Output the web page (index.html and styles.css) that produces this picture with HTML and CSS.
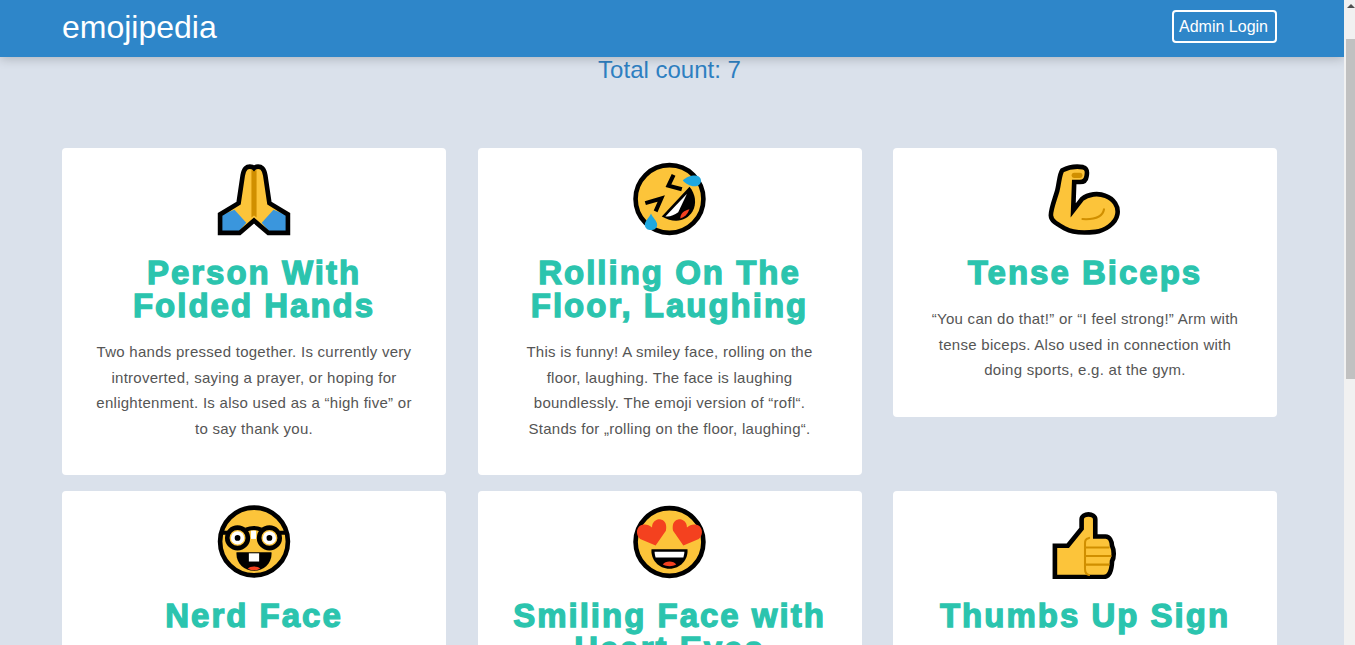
FILE: index.html
```html
<!DOCTYPE html>
<html lang="en">
<head>
  <meta charset="UTF-8" />
  <meta name="viewport" content="width=device-width, initial-scale=1.0"/>
  <title>Emojipedia</title>
  <link rel="stylesheet" href="styles.css">
</head>
<body>
  <div class="page">
    <!-- top bar -->
    <header class="navbar">
      <a class="brand" href="#">emojipedia</a>
      <a class="login" href="#">Admin Login</a>
    </header>

    <main class="content">
      <h2 class="count">Total count: 7</h2>

      <div class="cards">
        <!-- PRAY -->
        <article class="card">
          <svg class="emoji" viewBox="0 0 72 72">
            <path class="skin" d="M36 6 C38 4 42 4 44 6 C46 8 46.500 10 47 13 L51 40 L69 51 V69 H50 L36 57 L22 69 H3 V51 L21 40 L25 13 C25.500 10 26 8 28 6 C30 4 34 4 36 6 Z"/>
            <path class="blue" d="M3 52 L17 46.500 L28.500 59 L20 69 H3 Z M69 52 L55 46.500 L43.500 59 L52 69 H69 Z"/>
            <path class="gold-fill" d="M33.500 8 H38.500 V54 L36 52 L33.500 54 Z"/>
            <path class="line" d="M36 6 C38 4 42 4 44 6 C46 8 46.500 10 47 13 L51 40 L69 51 V69 H50 L36 57 L22 69 H3 V51 L21 40 L25 13 C25.500 10 26 8 28 6 C30 4 34 4 36 6 Z"/>
          </svg>
          <h3 class="title">Person With Folded Hands</h3>
          <p class="desc">Two hands pressed together. Is currently very introverted, saying a prayer, or hoping for enlightenment. Is also used as a “high five” or to say thank you.</p>
        </article>

        <!-- ROFL -->
        <article class="card">
          <svg class="emoji" viewBox="0 0 72 72">
            <circle class="skin line" cx="35.500" cy="36" r="33"/>
            <path class="thin" d="M39.500 12.500 L34.500 23 L47.500 26.500 M12 40 L27.500 35.500 L22 48"/>
            <path class="dark" d="M28 53 L55 24 C61 31 62 41 58 48 C52 58 40 60 28 53 Z"/>
            <path class="white" d="M31.500 53 L52.500 31 L44 49 C40 52 36 53.500 31.500 53 Z"/>
            <path class="red" d="M46 55 C46 50 50 47 55 46 C53 51 50 54 46 55 Z"/>
            <path class="drop" d="M48.500 18 C52 14 60 12 64 14 C67 16 67 21 63 23 C58 25 52 22 48.500 18 Z"/>
            <path class="drop" d="M17.500 50 C19 54 23.500 57 23.500 61 C23.500 68 11.500 68 11.500 61 C11.500 57 16 54 17.500 50 Z"/>
          </svg>
          <h3 class="title">Rolling On The Floor, Laughing</h3>
          <p class="desc">This is funny! A smiley face, rolling on the floor, laughing. The face is laughing boundlessly. The emoji version of “rofl“. Stands for „rolling on the floor, laughing“.</p>
        </article>

        <!-- BICEPS -->
        <article class="card">
          <svg class="emoji" viewBox="0 0 72 72">
            <path class="skin line" d="M14 8 C20 5 28 4 34 5 C38 6 38.500 9 37.500 14 C37 18 35 19.500 31 19.500 H25.500 L24.500 47 L33 36 C39 31 49 30 56 33 C64 36 69 43 67.500 51 C66 60 55 67 46 68 C36 69 24 69 17 65 C10 61 3 58 2.800 52 C2.700 46 6 38 9 28 C11 20 11 12 14 8 Z"/>
            <path class="gold" d="M25.500 13 H31"/>
            <path class="gold-thin" d="M33.500 55.500 C42 56 53 55 54.500 46"/>
          </svg>
          <h3 class="title">Tense Biceps</h3>
          <p class="desc">“You can do that!” or “I feel strong!” Arm with tense biceps. Also used in connection with doing sports, e.g. at the gym.</p>
        </article>

        <!-- NERD -->
        <article class="card">
          <svg class="emoji" viewBox="0 0 72 72">
            <circle class="skin line" cx="36" cy="35.500" r="33"/>
            <path class="thin" d="M4 27 H11 M61 27 H68 M28 24 C33 22 39 22 43 24"/>
            <rect class="white" x="33" y="25" width="5" height="8"/>
            <circle class="skin thin glass" cx="20" cy="32" r="10"/>
            <circle class="skin thin glass" cx="51" cy="32" r="10"/>
            <circle class="white" cx="20" cy="32" r="6.500"/>
            <circle class="white" cx="51" cy="32" r="6.500"/>
            <circle class="dark" cx="20" cy="32" r="2.800"/>
            <circle class="dark" cx="51" cy="32" r="2.800"/>
            <path class="dark" d="M19 46 H53 C54 56 46 64 36 64 C26 64 18 56 19 46 Z"/>
            <rect class="white" x="31" y="47" width="10" height="8"/>
            <path class="red" d="M30 62 C32 59 40 59 42 62 C38 64 34 64 30 62 Z"/>
          </svg>
          <h3 class="title">Nerd Face</h3>
        </article>

        <!-- HEARTS -->
        <article class="card">
          <svg class="emoji" viewBox="0 0 72 72">
            <circle class="skin line" cx="35.500" cy="36" r="33"/>
            <path class="heart" d="M22 39.500 L7 33 C2 29 3 20 10 19 C13 18.500 16 19.500 18.500 22 C18.500 16 23 13.500 27 14 C32 15 33 20 32 25 Z"/>
            <path class="heart" d="M49 39.500 L64 33 C69 29 68 20 61 19 C58 18.500 55 19.500 52.500 22 C52.500 16 48 13.500 44 14 C39 15 38 20 39 25 Z"/>
            <path class="dark" d="M18 43 H53 C54 53 46 62 35.500 62 C25 62 17 53 18 43 Z"/>
            <path class="white" d="M21 45.500 H50 C50 47.500 49.500 49 49 51 H22 C21.500 49 21 47.500 21 45.500 Z"/>
            <path class="red" d="M29 58 C31 54 40 54 42 58 C38 60 33 60 29 58 Z"/>
          </svg>
          <h3 class="title">Smiling Face with Heart Eyes</h3>
        </article>

        <!-- THUMBS UP -->
        <article class="card">
          <svg class="emoji" viewBox="0 0 72 72">
            <path class="skin line" d="M6.700 39.700 H19.300 L32.700 23 V14 C32.700 7.500 46 7.500 46 14 V30.700 H56 C60 30.700 62 35 62.300 39.700 C64.500 44 64.500 51 62.300 54.700 C62 64 60 70 54 70 H6.700 Z"/>
            <path class="gold-thin" d="M40 32 C36 33 36 35 36 38 V62 C36 66 37 67.500 40 68 M36 41.300 H59 M36 49.700 H61 M36 58 H59"/>
          </svg>
          <h3 class="title">Thumbs Up Sign</h3>
        </article>
      </div>
    </main>
  </div>

  <!-- scrollbar as it shows in the screenshot -->
  <div class="scrollbar">
    <div class="arrow"></div>
    <div class="thumb"></div>
  </div>
</body>
</html>
```

FILE: styles.css
```css
/* page */
html, body {
  height: 100%;
}
body {
  margin: 0;
  display: flex;
  height: 645px;
  overflow: hidden;
  background: #dae1eb;
  font-family: "Liberation Sans", Arial, sans-serif;
}
.page {
  flex: 1;
  min-width: 0;
  height: 645px;
  overflow: hidden;
}

/* top bar */
.navbar {
  position: relative;
  z-index: 1;
  display: flex;
  align-items: center;
  justify-content: space-between;
  box-sizing: border-box;
  height: 57px;
  padding: 0 67px 5px 62px;
  background: #2e86c9;
  box-shadow: 0 2px 10px rgba(0, 0, 0, .2);
}
.brand {
  margin-top: 2px;
  color: #fff;
  font-size: 32px;
  line-height: 48px;
  text-decoration: none;
}
.login {
  display: block;
  padding: 5px 7px 4px 5px;
  color: #fff;
  font-size: 16px;
  line-height: 20px;
  text-decoration: none;
  border: 2px solid #fff;
  border-radius: 4px;
}

/* content */
.content {
  padding: 0 67px 0 62px;
}
.count {
  margin: 0 0 66px;
  color: #2e7fc1;
  font-size: 24px;
  font-weight: 400;
  line-height: 25px;
  text-align: center;
}
.cards {
  display: grid;
  grid-template-columns: repeat(3, 384px);
  justify-content: space-between;
  align-items: start;
  row-gap: 16px;
}
.card {
  box-sizing: border-box;
  padding: 14px 32px 34px;
  background: #fff;
  border-radius: 4px;
  text-align: center;
}
.emoji {
  display: block;
  width: 74px;
  height: 74px;
  margin: 0 auto;
}
.title {
  margin: 20px 0 17px;
  color: #2bc4ae;
  font-size: 33px;
  font-weight: 700;
  line-height: 33px;
  letter-spacing: 2px;
  -webkit-text-stroke: 1.300px #2bc4ae;
}
.desc {
  margin: 0;
  color: #555;
  font-size: 15px;
  line-height: 25.600px;
  letter-spacing: .27px;
}

/* emoji parts */
.skin { fill: #fcc43a; }
.blue { fill: #3a96dd; }
.dark { fill: #000; }
.white { fill: #fff; }
.red { fill: #f4411f; }
.drop { fill: #1fa8e0; }
.heart { fill: #f4411f; }
.gold-fill { fill: #d08f00; }
.line {
  stroke: #000;
  stroke-width: 4.500;
}
.line:not(.skin) { fill: none; }
.thin {
  fill: none;
  stroke: #000;
  stroke-width: 4;
}
.skin.thin { fill: #fcc43a; }
.glass { stroke-width: 4.500; }
.gold {
  fill: none;
  stroke: #d08f00;
  stroke-width: 5;
  stroke-linecap: round;
}
.gold-thin {
  fill: none;
  stroke: #d08f00;
  stroke-width: 2;
  stroke-linecap: round;
}

/* scrollbar */
.scrollbar {
  flex: 0 0 11px;
  height: 645px;
  padding-left: 2px;
  box-sizing: border-box;
  background: #f1f1f1;
}
.arrow {
  width: 0;
  height: 0;
  margin: 4px 0 0 1px;
  border-left: 4px solid transparent;
  border-right: 4px solid transparent;
  border-bottom: 4px solid #505050;
}
.thumb {
  height: 340px;
  margin-top: 31px;
  background: #c1c1c1;
}
```
